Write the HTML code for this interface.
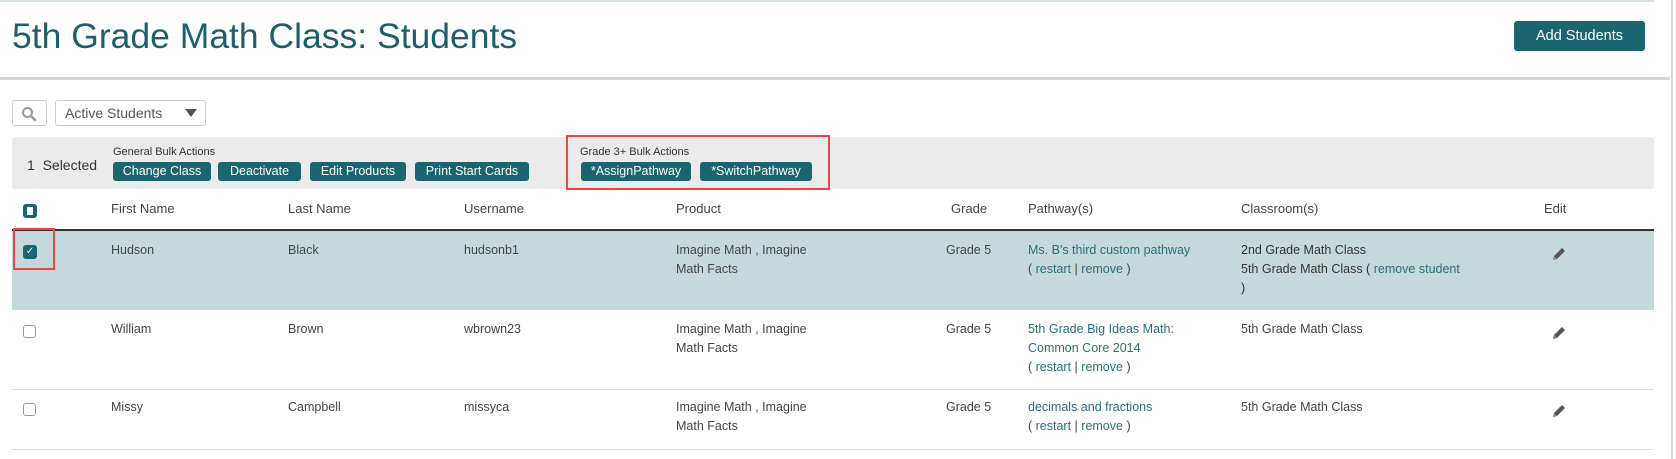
<!DOCTYPE html>
<html><head><meta charset="utf-8"><style>
*{margin:0;padding:0;box-sizing:border-box}
body{width:1676px;height:459px;overflow:hidden;background:#fff;font-family:"Liberation Sans",sans-serif;color:#444;font-size:12.5px;line-height:19px;position:relative}
.a{position:absolute;white-space:nowrap}
.btn{position:absolute;background:#1b6570;color:#fff;border-radius:3px;font-size:12.5px;text-align:center;line-height:19px;height:19px}
.l{color:#2a6e78}
.cb{position:absolute;width:13px;height:13px;border:1px solid #999;border-radius:3px;background:#fff}
.pen{position:absolute;width:16px;height:16px}
</style></head><body>
<div class="a" style="left:0;top:0;width:1654px;height:2px;background:#cfe9d3"></div>
<div class="a" style="left:1671px;top:0;width:2px;height:459px;background:#d8d8d8"></div>
<div class="a" style="left:12px;top:16px;font-size:35.5px;line-height:40px;color:#1d5f6b">5th Grade Math Class: Students</div>
<div class="btn" style="left:1514px;top:21px;width:131px;height:30px;line-height:30px;font-size:14.5px">Add Students</div>
<div class="a" style="left:0;top:77px;width:1670px;height:3px;background:#d3d6da"></div>

<div class="a" style="left:12px;top:100px;width:35px;height:26px;border:1px solid #ccc;border-radius:3px"></div>
<svg class="a" style="left:21px;top:106px" width="16" height="16" viewBox="0 0 16 16"><circle cx="6.5" cy="6.5" r="4.5" fill="none" stroke="#999" stroke-width="2"/><path d="M10 10l4 4" stroke="#999" stroke-width="2.5" stroke-linecap="round"/></svg>
<div class="a" style="left:55px;top:100px;width:151px;height:26px;border:1px solid #ccc;border-radius:3px"></div>
<div class="a" style="left:65px;top:104px;font-size:14px;color:#555">Active Students</div>
<div class="a" style="left:185px;top:109px;width:0;height:0;border-left:6px solid transparent;border-right:6px solid transparent;border-top:8px solid #555"></div>

<div class="a" style="left:12px;top:137px;width:1642px;height:52px;background:#ebebeb;border-radius:3px"></div>
<div class="a" style="left:27px;top:156px;font-size:14px;color:#333">1 &nbsp;Selected</div>
<div class="a" style="left:113px;top:143px;font-size:11px;color:#333">General Bulk Actions</div>
<div class="btn" style="left:113px;top:162px;width:98px">Change Class</div>
<div class="btn" style="left:218px;top:162px;width:83px">Deactivate</div>
<div class="btn" style="left:310px;top:162px;width:96px">Edit Products</div>
<div class="btn" style="left:415px;top:162px;width:114px">Print Start Cards</div>
<div class="a" style="left:580px;top:143px;font-size:11px;color:#333">Grade 3+ Bulk Actions</div>
<div class="btn" style="left:581px;top:162px;width:110px">*AssignPathway</div>
<div class="btn" style="left:700px;top:162px;width:112px">*SwitchPathway</div>
<div class="a" style="left:566px;top:135px;width:264px;height:55px;border:2px solid #ef4444"></div>

<div class="a" style="left:23px;top:204px;width:14px;height:14px;background:#1b6570;border-radius:3px"></div>
<div class="a" style="left:27px;top:207px;width:6px;height:8px;background:#fff"></div>
<div class="a" style="left:111px;top:199px;font-size:13px">First Name</div>
<div class="a" style="left:288px;top:199px;font-size:13px">Last Name</div>
<div class="a" style="left:464px;top:199px;font-size:13px">Username</div>
<div class="a" style="left:676px;top:199px;font-size:13px">Product</div>
<div class="a" style="left:951px;top:199px;font-size:13px">Grade</div>
<div class="a" style="left:1028px;top:199px;font-size:13px">Pathway(s)</div>
<div class="a" style="left:1241px;top:199px;font-size:13px">Classroom(s)</div>
<div class="a" style="left:1544px;top:199px;font-size:13px">Edit</div>
<div class="a" style="left:12px;top:229px;width:1642px;height:2px;background:#333"></div>

<div class="a" style="left:12px;top:231px;width:1642px;height:79px;background:#c5d9dc"></div>
<div class="a" style="left:23px;top:245px;width:14px;height:14px;background:#1b6570;border-radius:3px;color:#fff;font-size:10px;line-height:14px;text-align:center">✓</div>
<div class="a" style="left:13px;top:228px;width:42px;height:42px;border:2px solid #ef4444"></div>
<div class="a" style="left:111px;top:241px">Hudson</div>
<div class="a" style="left:288px;top:241px">Black</div>
<div class="a" style="left:464px;top:241px">hudsonb1</div>
<div class="a" style="left:676px;top:241px">Imagine Math , Imagine<br>Math Facts</div>
<div class="a" style="left:946px;top:241px">Grade 5</div>
<div class="a" style="left:1028px;top:241px"><span class="l">Ms. B's third custom pathway</span><br>( <span class="l">restart</span> | <span class="l">remove</span> )</div>
<div class="a" style="left:1241px;top:241px;color:#333">2nd Grade Math Class<br>5th Grade Math Class ( <span class="l">remove student</span><br>)</div>

<div class="a" style="left:12px;top:389px;width:1642px;height:1px;background:#ddd"></div>
<div class="cb" style="left:23px;top:325px"></div>
<div class="a" style="left:111px;top:320px">William</div>
<div class="a" style="left:288px;top:320px">Brown</div>
<div class="a" style="left:464px;top:320px">wbrown23</div>
<div class="a" style="left:676px;top:320px">Imagine Math , Imagine<br>Math Facts</div>
<div class="a" style="left:946px;top:320px">Grade 5</div>
<div class="a" style="left:1028px;top:320px"><span class="l">5th Grade Big Ideas Math:<br>Common Core 2014</span><br>( <span class="l">restart</span> | <span class="l">remove</span> )</div>
<div class="a" style="left:1241px;top:320px">5th Grade Math Class</div>

<div class="a" style="left:12px;top:449px;width:1642px;height:1px;background:#ddd"></div>
<div class="cb" style="left:23px;top:403px"></div>
<div class="a" style="left:111px;top:398px">Missy</div>
<div class="a" style="left:288px;top:398px">Campbell</div>
<div class="a" style="left:464px;top:398px">missyca</div>
<div class="a" style="left:676px;top:398px">Imagine Math , Imagine<br>Math Facts</div>
<div class="a" style="left:946px;top:398px">Grade 5</div>
<div class="a" style="left:1028px;top:398px"><span class="l">decimals and fractions</span><br>( <span class="l">restart</span> | <span class="l">remove</span> )</div>
<div class="a" style="left:1241px;top:398px">5th Grade Math Class</div>

<svg class="pen" style="left:1551px;top:246px" viewBox="0 0 16 16"><path d="M2 14l1-4 8-8 3 3-8 8z" fill="#555"/><path d="M2 14l1-4 3 3z" fill="#888"/></svg>
<svg class="pen" style="left:1551px;top:325px" viewBox="0 0 16 16"><path d="M2 14l1-4 8-8 3 3-8 8z" fill="#555"/><path d="M2 14l1-4 3 3z" fill="#888"/></svg>
<svg class="pen" style="left:1551px;top:403px" viewBox="0 0 16 16"><path d="M2 14l1-4 8-8 3 3-8 8z" fill="#555"/><path d="M2 14l1-4 3 3z" fill="#888"/></svg>
</body></html>
